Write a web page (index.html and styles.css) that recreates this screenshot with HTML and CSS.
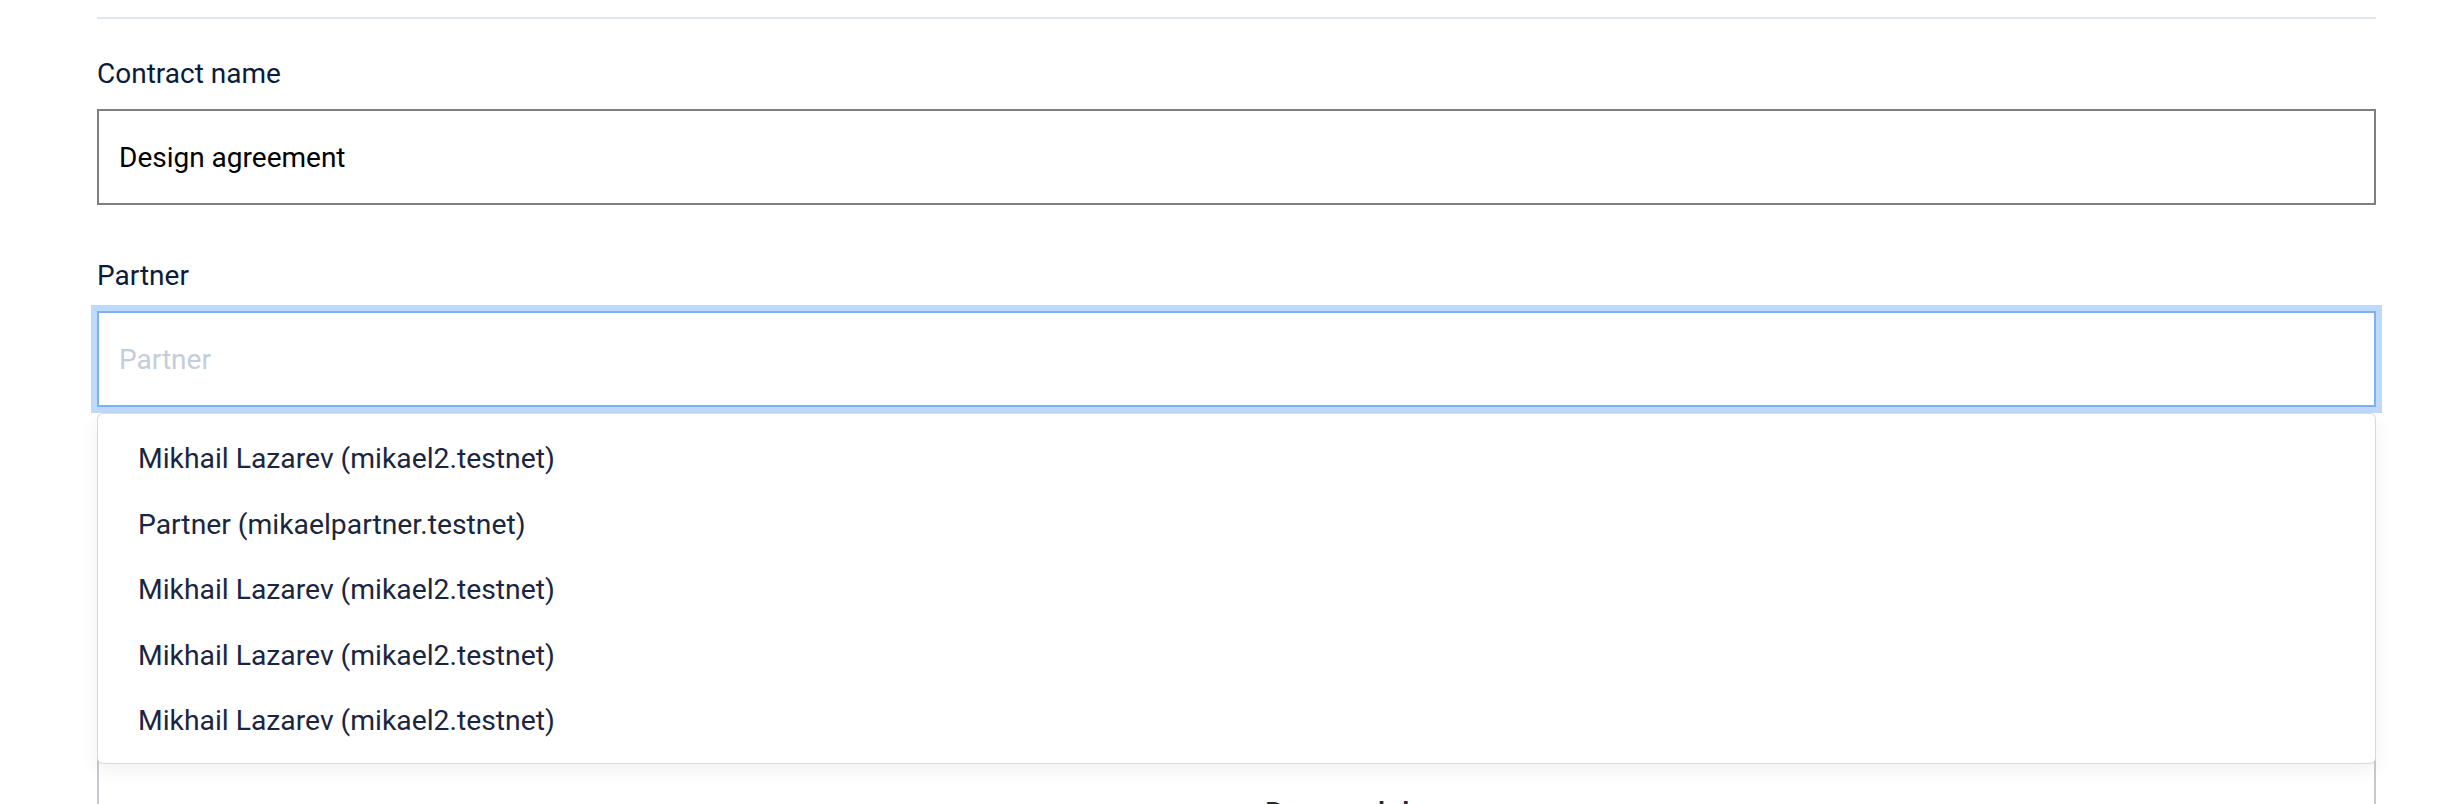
FILE: index.html
```html
<!DOCTYPE html>
<html lang="en">
<head>
<meta charset="utf-8">
<title>Contract form</title>
<link rel="stylesheet" href="styles.css">
</head>
<body>
<div class="page">
  <hr class="divider">
  <form class="form">
    <div class="field">
      <label class="label" for="contract-name">Contract name</label>
      <input class="input" id="contract-name" type="text" value="Design agreement">
    </div>
    <div class="field">
      <label class="label" for="partner">Partner</label>
      <input class="input input--focused" id="partner" type="text" placeholder="Partner">
      <ul class="dropdown">
        <li class="option">Mikhail Lazarev (mikael2.testnet)</li>
        <li class="option">Partner (mikaelpartner.testnet)</li>
        <li class="option">Mikhail Lazarev (mikael2.testnet)</li>
        <li class="option">Mikhail Lazarev (mikael2.testnet)</li>
        <li class="option">Mikhail Lazarev (mikael2.testnet)</li>
      </ul>
    </div>
    <div class="field">
      <span class="label label--spacer"></span>
      <div class="dropzone">
        <span class="dropzone-text">Drag and drop</span>
      </div>
    </div>
  </form>
</div>
</body>
</html>
```
FILE: styles.css
```css
* {
  box-sizing: border-box;
}

html, body {
  margin: 0;
  background: #ffffff;
}

body {
  font-family: Roboto, "Noto Sans", "Liberation Sans", sans-serif;
}

.page {
  padding: 17px 74px 0 97px;
  height: 804px;
  overflow: hidden;
}

.divider {
  height: 2px;
  margin: 0;
  border: 0;
  background: #e1e5ec;
}

.form {
  display: flex;
  flex-direction: column;
  gap: 50px;
  padding-top: 34px;
}

.field {
  position: relative;
  display: flex;
  flex-direction: column;
  gap: 14px;
}

.label {
  font-size: 28px;
  line-height: 42px;
  color: #0b1c3a;
}

.label--spacer {
  display: block;
  height: 42px;
}

.input {
  display: block;
  width: 100%;
  height: 96px;
  margin: 0;
  padding: 0 20px;
  border: 2px solid #7f7f7f;
  border-radius: 0;
  background: #ffffff;
  font-family: Roboto, "Noto Sans", "Liberation Sans", sans-serif;
  font-size: 28px;
  color: #000000;
  outline: none;
}

.input::placeholder {
  color: #c3cddb;
  opacity: 1;
}

.input--focused {
  border-color: #7db0f7;
  box-shadow: 0 0 0 6px #bfd9fd;
}

.dropdown {
  position: absolute;
  top: calc(100% + 6px);
  left: 0;
  right: 0;
  z-index: 10;
  margin: 0;
  padding: 12px 0 9px;
  list-style: none;
  background: #ffffff;
  border: 1.5px solid rgba(20, 30, 50, 0.17);
  border-radius: 6px;
  box-shadow: 0 6px 20px rgba(0, 0, 0, 0.06);
}

.option {
  padding: 16px 40px;
  font-size: 28.3px;
  line-height: 33.6px;
  color: #1a2640;
}

.dropzone {
  height: 420px;
  padding: 280px 0 0 1166px;
  border: 2px solid #c6c9cf;
  border-radius: 6px;
}

.dropzone-text {
  font-size: 30px;
  font-weight: 500;
  color: #222831;
}
```
